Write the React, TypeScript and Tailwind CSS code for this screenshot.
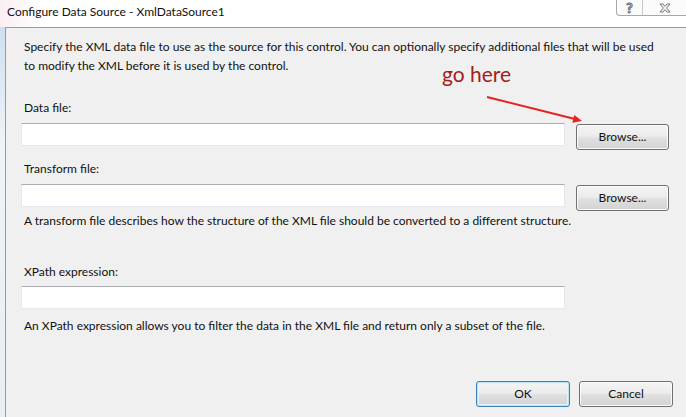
const Field = ({ browse = false }: { browse?: boolean }) => (
  <div className="flex items-start">
    <div className="w-[544px] h-[23px] bg-white border border-[#e3e9ef] border-t-[#abadb3]" />
    {browse && <WinButton label="Browse..." className="ml-[11px] mt-px w-[93px]" />}
  </div>
);

const WinButton = ({
  label,
  className = "",
  primary = false,
}: {
  label: string;
  className?: string;
  primary?: boolean;
}) => (
  <button
    className={`${className} h-[26px] rounded-[3px] border text-[12px] text-[#111] bg-[linear-gradient(#f4f4f4,#ececec_45%,#dfdfdf_55%,#d3d3d3)] ${
      primary
        ? "border-[#3c7fb1] shadow-[inset_0_0_0_1px_#bfe2f5,inset_0_0_0_2px_#e3f3fb]"
        : "border-[#707070] shadow-[inset_0_0_0_1px_#fbfbfb]"
    }`}
  >
    {label}
  </button>
);

const App = () => {
  return (
    <div className="relative w-[686px] h-[417px] overflow-hidden bg-white flex flex-col font-['Lato',sans-serif] text-[12px] leading-4 text-[#111]">
      {/* Title bar */}
      <div className="h-[27px] flex items-start justify-between shrink-0 bg-[linear-gradient(90deg,#fbeef2,#ffffff_6%)]">
        <span className="pl-[7px] pt-1">Configure Data Source - XmlDataSource1</span>
        <div className="flex h-[17px] -mt-px border border-r-0 border-[#a8a8a8] rounded-bl-[4px] bg-[#fbfbfb]">
          <div className="w-[26px] flex items-center justify-center border-r border-[#c8c8c8]">
            <span className="text-[14px] font-bold leading-none text-transparent [-webkit-text-stroke:1px_#6a6a6a]">?</span>
          </div>
          <div className="w-[43px] flex items-center justify-center">
            <svg width="12" height="10" viewBox="0 0 12 10">
              <path
                d="M1 1h3l2 2.3L8 1h3L7.6 5 11 9H8L6 6.7 4 9H1l3.4-4z"
                fill="#f4f4f4"
                stroke="#6a6a6a"
                strokeWidth="0.9"
                strokeLinejoin="round"
              />
            </svg>
          </div>
        </div>
      </div>

      {/* Body */}
      <div className="flex flex-1">
        <div className="w-[5px] bg-[linear-gradient(#cfe0f0,#eef3f8_30%,#e9eef4)]" />
        <div className="flex-1 flex flex-col bg-[#f0f0f0] border-l border-t border-[#9a9a9a] pl-[15px]">
          <p className="ml-[3px] mt-[9px] leading-[19px]">
            Specify the XML data file to use as the source for this control. You can optionally specify additional files that will be used
            <br />
            to modify the XML before it is used by the control.
          </p>

          <label className="ml-[3px] mt-[25px]">Data file:</label>
          <div className="mt-[7px]">
            <Field browse />
          </div>

          <label className="ml-[3px] mt-[11px]">Transform file:</label>
          <div className="mt-[7px]">
            <Field browse />
          </div>
          <p className="ml-[3px] mt-[2px]">
            A transform file describes how the structure of the XML file should be converted to a different structure.
          </p>

          <label className="ml-[3px] mt-[35px]">XPath expression:</label>
          <div className="mt-[6px]">
            <Field />
          </div>
          <p className="ml-[3px] mt-[9px]">
            An XPath expression allows you to filter the data in the XML file and return only a subset of the file.
          </p>

          <div className="mt-[47px] flex justify-end gap-[9px] pr-[13px]">
            <WinButton label="OK" primary className="w-[94px]" />
            <WinButton label="Cancel" className="w-[94px]" />
          </div>
        </div>
      </div>

      {/* Annotation */}
      <span className="absolute left-[442px] top-[62px] text-[21px] leading-6 text-[#a31c1c]">go here</span>
      <svg className="absolute left-[480px] top-[90px]" width="110" height="40" viewBox="0 0 110 40">
        <line x1="7" y1="7" x2="94" y2="28.8" stroke="#e5221d" strokeWidth="2" />
        <polygon points="102,31 92.3,32.7 94.3,24.9" fill="#e5221d" />
      </svg>
    </div>
  );
};

export default App;
